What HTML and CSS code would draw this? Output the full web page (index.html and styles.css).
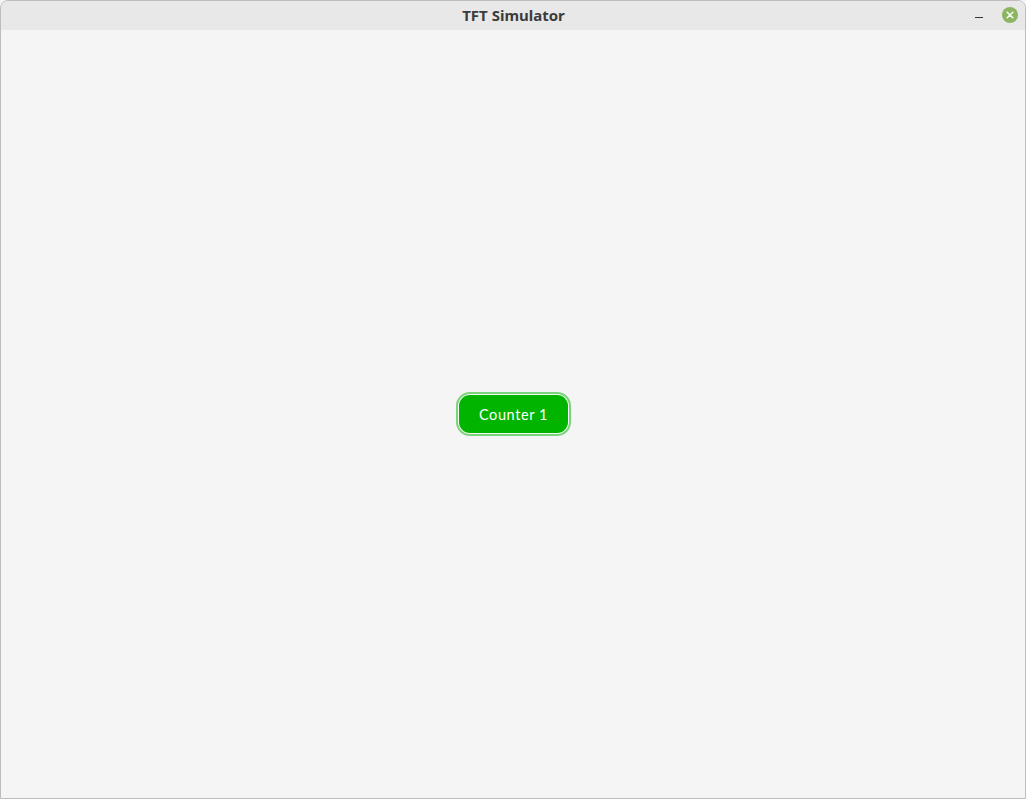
FILE: index.html
```html
<!DOCTYPE html>
<html>
<head>
<meta charset="utf-8">
<link rel="stylesheet" href="styles.css">
</head>
<body>
<div class="window">
  <div class="titlebar">
    <div class="title">TFT Simulator</div>
    <div class="controls">
      <span class="minimize"></span>
      <span class="close">
        <svg width="16" height="16" viewBox="0 0 16 16"><circle cx="8" cy="8" r="8" fill="#8cb561"/><path d="M5.2 5.2 L10.8 10.8 M10.8 5.2 L5.2 10.8" stroke="#f4f8ee" stroke-width="1.6" stroke-linecap="round"/></svg>
      </span>
    </div>
  </div>
  <div class="content">
    <button class="btn">Counter 1</button>
  </div>
</div>
</body>
</html>
```
FILE: styles.css
```css
html, body { margin: 0; padding: 0; }
body { width: 1026px; height: 799px; overflow: hidden; background: #f5f5f5; }
.window {
  box-sizing: border-box;
  width: 1026px; height: 799px;
  border: 1px solid #bdbdbd;
  border-radius: 8px 8px 0 0;
  display: flex; flex-direction: column;
  overflow: hidden;
  background: #f5f5f5;
}
.titlebar {
  height: 29px;
  background: #e8e8e8;
  position: relative;
  display: flex; align-items: center; justify-content: center;
  flex: none;
}
.title {
  font-family: "Noto Sans", "DejaVu Sans", sans-serif;
  font-weight: bold;
  font-size: 15px;
  color: #3c3c3c;
  margin-top: -1px;
  margin-left: 1px;
}
.controls {
  position: absolute; right: 7px; top: 6px;
  display: flex; align-items: center; gap: 19px;
}
.minimize { width: 8px; height: 1px; background: #333; margin-top: 5px; }
.close { width: 16px; height: 16px; display: block; }
.close svg { display: block; }
.content {
  flex: 1;
  display: flex; align-items: center; justify-content: center;
  background: #f5f5f5;
}
.btn {
  width: 109px; height: 38px;
  margin-left: 1px;
  background: #00b400;
  border: none;
  border-radius: 11px;
  outline: 2px solid rgba(0, 180, 0, 0.5);
  outline-offset: 1px;
  color: #ffffff;
  font-family: "Lato", "Open Sans", sans-serif;
  font-size: 14.5px;
  letter-spacing: 0.6px;
  padding: 0;
}
```
